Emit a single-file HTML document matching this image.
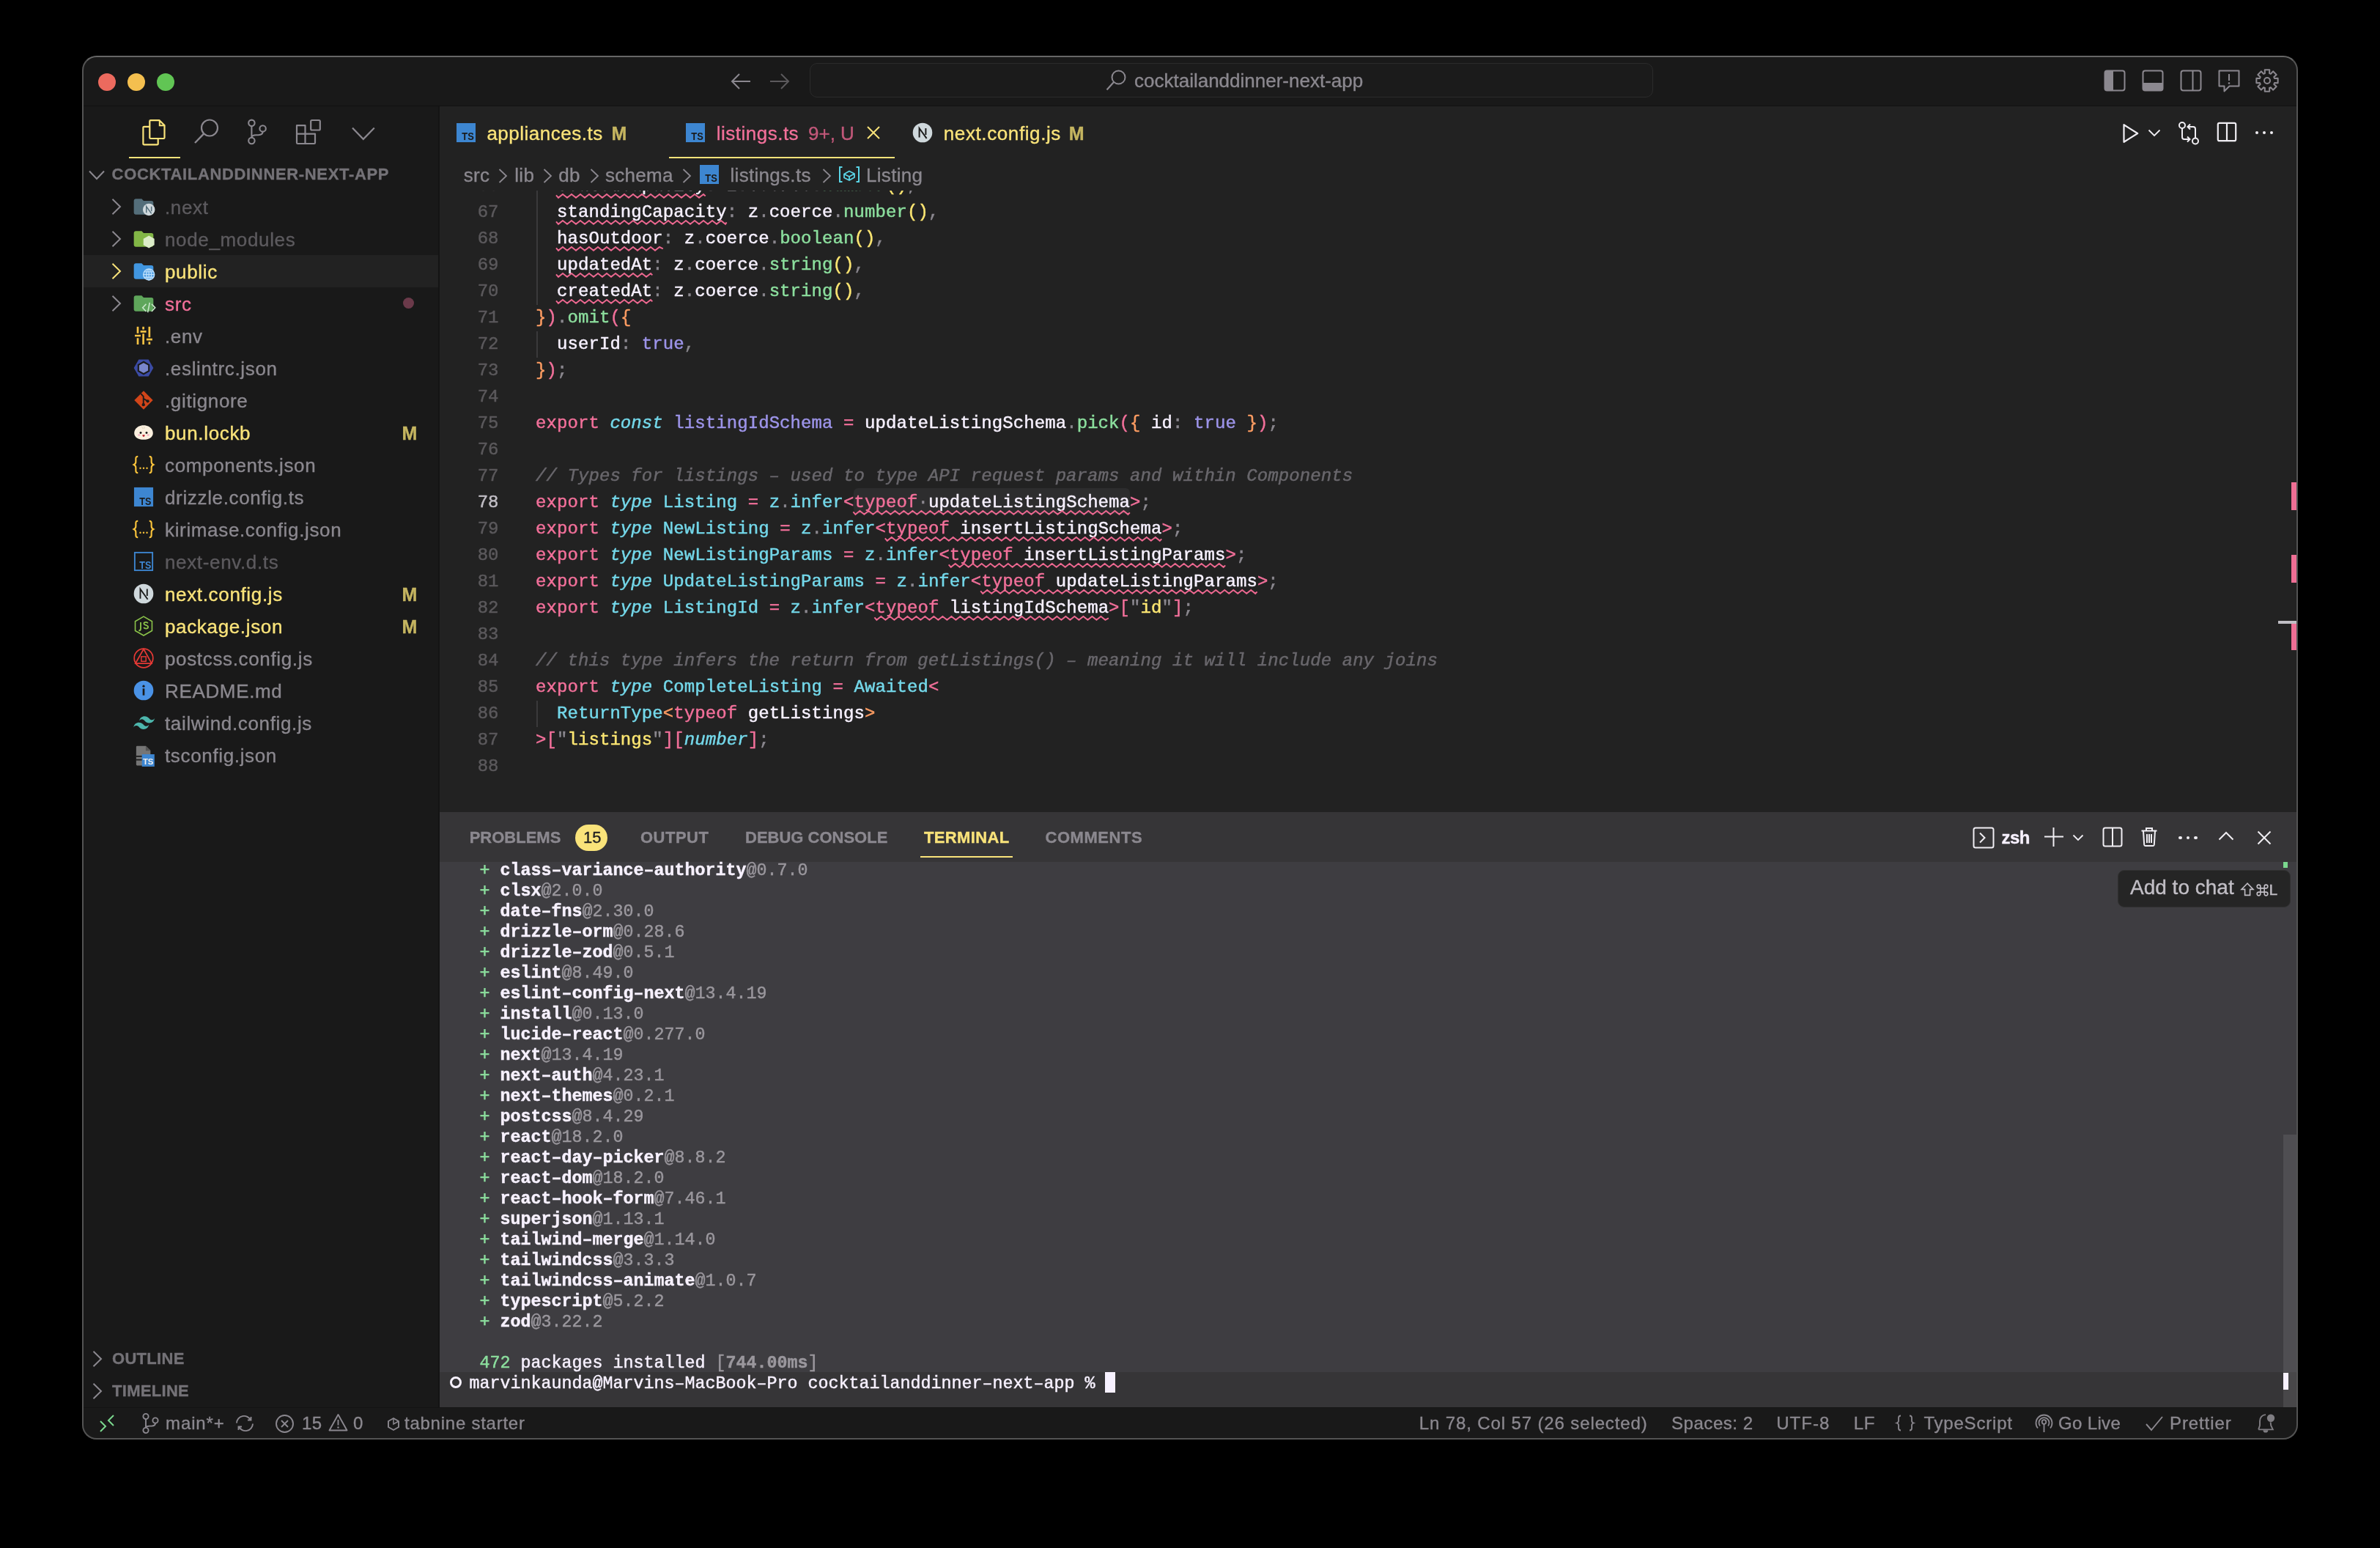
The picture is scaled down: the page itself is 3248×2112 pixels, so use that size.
<!DOCTYPE html><html><head><meta charset="utf-8"><style>
*{margin:0;padding:0;box-sizing:border-box}
html,body{width:3248px;height:2112px;background:#000;overflow:hidden}
body{position:relative;font-family:"Liberation Sans",sans-serif;color:#8b888f}
.a{position:absolute}
.t{position:absolute;white-space:pre;line-height:1;-webkit-text-stroke:0.35px currentColor}
.win{position:absolute;left:0;top:0;width:3248px;height:2112px;will-change:transform;clip-path:inset(76px 112px 148px 112px round 20px)}
.mono{font-family:"Liberation Mono",monospace;-webkit-text-stroke:0.45px currentColor}
svg{position:absolute;overflow:visible}
</style></head><body><div class="win"><div class="a" style="left:112px;top:76px;width:3024px;height:1888px;background:#191919;"></div><div class="a" style="left:112px;top:144px;width:3024px;height:1px;background:#111111;"></div><div class="a" style="left:598px;top:145px;width:2px;height:1775px;background:#141414;"></div><div class="a" style="left:600px;top:145px;width:2536px;height:963px;background:#222222;"></div><div class="a" style="left:600px;top:1108px;width:2536px;height:812px;background:#363537;"></div><div class="a" style="left:600px;top:1176px;width:2536px;height:696px;background:#3e3d41;"></div><div class="a" style="left:112px;top:1920px;width:3024px;height:44px;background:#191919;"></div><div class="a" style="left:134px;top:100px;width:24px;height:24px;border-radius:50%;background:#ec6a5e"></div><div class="a" style="left:174px;top:100px;width:24px;height:24px;border-radius:50%;background:#f4bf4f"></div><div class="a" style="left:214px;top:100px;width:24px;height:24px;border-radius:50%;background:#61c554"></div><div class="a" style="left:1105px;top:86px;width:1151px;height:47px;border-radius:10px;border:1.5px solid #2b2b2b;background:#1b1b1b"></div><div class="t" style="left:1548px;top:96.99px;font-size:26px;color:#8b888f;font-weight:normal;letter-spacing:0px;font-style:normal;">cocktailanddinner-next-app</div><div class="t" style="left:152.6px;top:227.38px;font-size:22px;color:#747277;font-weight:bold;letter-spacing:0.66px;font-style:normal;">COCKTAILANDDINNER-NEXT-APP</div><div class="a" style="left:114px;top:348px;width:484px;height:44px;background:#222222;"></div><div class="t" style="left:225px;top:269.79px;font-size:26px;color:#5c5a5e;font-weight:normal;letter-spacing:0.65px;font-style:normal;">.next</div><div class="t" style="left:225px;top:313.79px;font-size:26px;color:#5c5a5e;font-weight:normal;letter-spacing:0.65px;font-style:normal;">node_modules</div><div class="t" style="left:225px;top:357.79px;font-size:26px;color:#f9e37a;font-weight:normal;letter-spacing:0.65px;font-style:normal;">public</div><div class="t" style="left:225px;top:401.79px;font-size:26px;color:#f2709a;font-weight:normal;letter-spacing:0.65px;font-style:normal;">src</div><div class="t" style="left:225px;top:445.79px;font-size:26px;color:#8b888f;font-weight:normal;letter-spacing:0.65px;font-style:normal;">.env</div><div class="t" style="left:225px;top:489.79px;font-size:26px;color:#8b888f;font-weight:normal;letter-spacing:0.65px;font-style:normal;">.eslintrc.json</div><div class="t" style="left:225px;top:533.79px;font-size:26px;color:#8b888f;font-weight:normal;letter-spacing:0.65px;font-style:normal;">.gitignore</div><div class="t" style="left:225px;top:577.79px;font-size:26px;color:#f9e37a;font-weight:normal;letter-spacing:0.65px;font-style:normal;">bun.lockb</div><div class="t" style="left:225px;top:621.79px;font-size:26px;color:#8b888f;font-weight:normal;letter-spacing:0.65px;font-style:normal;">components.json</div><div class="t" style="left:225px;top:665.79px;font-size:26px;color:#8b888f;font-weight:normal;letter-spacing:0.65px;font-style:normal;">drizzle.config.ts</div><div class="t" style="left:225px;top:709.79px;font-size:26px;color:#8b888f;font-weight:normal;letter-spacing:0.65px;font-style:normal;">kirimase.config.json</div><div class="t" style="left:225px;top:753.79px;font-size:26px;color:#5c5a5e;font-weight:normal;letter-spacing:0.65px;font-style:normal;">next-env.d.ts</div><div class="t" style="left:225px;top:797.79px;font-size:26px;color:#f9e37a;font-weight:normal;letter-spacing:0.65px;font-style:normal;">next.config.js</div><div class="t" style="left:225px;top:841.79px;font-size:26px;color:#f9e37a;font-weight:normal;letter-spacing:0.65px;font-style:normal;">package.json</div><div class="t" style="left:225px;top:885.79px;font-size:26px;color:#8b888f;font-weight:normal;letter-spacing:0.65px;font-style:normal;">postcss.config.js</div><div class="t" style="left:225px;top:929.79px;font-size:26px;color:#8b888f;font-weight:normal;letter-spacing:0.65px;font-style:normal;">README.md</div><div class="t" style="left:225px;top:973.79px;font-size:26px;color:#8b888f;font-weight:normal;letter-spacing:0.65px;font-style:normal;">tailwind.config.js</div><div class="t" style="left:225px;top:1017.79px;font-size:26px;color:#8b888f;font-weight:normal;letter-spacing:0.65px;font-style:normal;">tsconfig.json</div><div class="t" style="left:548.4px;top:578.64px;font-size:25px;color:#c5b560;font-weight:bold;letter-spacing:0px;font-style:normal;">M</div><div class="t" style="left:548.4px;top:798.64px;font-size:25px;color:#c5b560;font-weight:bold;letter-spacing:0px;font-style:normal;">M</div><div class="t" style="left:548.4px;top:842.64px;font-size:25px;color:#c5b560;font-weight:bold;letter-spacing:0px;font-style:normal;">M</div><div class="a" style="left:550px;top:406px;width:15px;height:15px;border-radius:50%;background:#6b3a4a"></div><div class="t" style="left:153px;top:1843.38px;font-size:22px;color:#747277;font-weight:bold;letter-spacing:0.3px;font-style:normal;">OUTLINE</div><div class="t" style="left:153px;top:1887.38px;font-size:22px;color:#747277;font-weight:bold;letter-spacing:0.3px;font-style:normal;">TIMELINE</div><div class="t" style="left:664.4px;top:169.19px;font-size:26px;color:#f9e37a;font-weight:normal;letter-spacing:0.5px;font-style:normal;">appliances.ts</div><div class="t" style="left:834.6px;top:170.04px;font-size:25px;color:#c5b560;font-weight:bold;letter-spacing:0px;font-style:normal;">M</div><div class="t" style="left:977.7px;top:169.19px;font-size:26px;color:#f2709a;font-weight:normal;letter-spacing:0.5px;font-style:normal;">listings.ts</div><div class="t" style="left:1103px;top:169.19px;font-size:26px;color:#c2587a;font-weight:normal;letter-spacing:0px;font-style:normal;">9+, U</div><div class="t" style="left:1287.8px;top:169.19px;font-size:26px;color:#f9e37a;font-weight:normal;letter-spacing:0.6px;font-style:normal;">next.config.js</div><div class="t" style="left:1458.8px;top:170.04px;font-size:25px;color:#c5b560;font-weight:bold;letter-spacing:0px;font-style:normal;">M</div><div class="a" style="left:913px;top:214px;width:308px;height:2px;background:#f9e37a;"></div><div class="t" style="left:632.7px;top:225.99px;font-size:26px;color:#8b888f;font-weight:normal;letter-spacing:0.3px;font-style:normal;">src</div><div class="t" style="left:702.3px;top:225.99px;font-size:26px;color:#8b888f;font-weight:normal;letter-spacing:0.3px;font-style:normal;">lib</div><div class="t" style="left:762.3px;top:225.99px;font-size:26px;color:#8b888f;font-weight:normal;letter-spacing:0.3px;font-style:normal;">db</div><div class="t" style="left:826px;top:225.99px;font-size:26px;color:#8b888f;font-weight:normal;letter-spacing:0.3px;font-style:normal;">schema</div><div class="t" style="left:996.5px;top:225.99px;font-size:26px;color:#8b888f;font-weight:normal;letter-spacing:0.3px;font-style:normal;">listings.ts</div><div class="t" style="left:1182px;top:225.99px;font-size:26px;color:#8b888f;font-weight:normal;letter-spacing:0.3px;font-style:normal;">Listing</div><div class="a" style="left:600px;top:260px;width:2536px;height:848px;overflow:hidden"><div class="a" style="left:565.4px;top:406.4px;width:376.5px;height:35px;background:#2d2d2e;border-radius:6px"></div><div class="a" style="left:132px;top:-167.6px;width:2px;height:324px;background:#3a393b"></div><div class="a" style="left:132px;top:192.4px;width:2px;height:36px;background:#3a393b"></div><div class="a" style="left:132px;top:696.4px;width:2px;height:36px;background:#3a393b"></div><div class="t mono" style="left:-40px;top:-23.6px;width:120.5px;text-align:right;font-size:24px;line-height:36px;color:#5b595c">66</div><div class="t mono" style="left:131.0px;top:-23.6px;font-size:24px;letter-spacing:0.080px;line-height:36px"><span style="color:#f7f1ff">  </span><span style="color:#f7f1ff">seatedCapacity</span><span style="color:#8b888f">:</span><span style="color:#f7f1ff"> z</span><span style="color:#8b888f">.</span><span style="color:#f7f1ff">coerce</span><span style="color:#8b888f">.</span><span style="color:#8cdf9e">number</span><span style="color:#fce672">()</span><span style="color:#8b888f">,</span></div><div class="t mono" style="left:-40px;top:12.4px;width:120.5px;text-align:right;font-size:24px;line-height:36px;color:#5b595c">67</div><div class="t mono" style="left:131.0px;top:12.4px;font-size:24px;letter-spacing:0.080px;line-height:36px"><span style="color:#f7f1ff">  </span><span style="color:#f7f1ff">standingCapacity</span><span style="color:#8b888f">:</span><span style="color:#f7f1ff"> z</span><span style="color:#8b888f">.</span><span style="color:#f7f1ff">coerce</span><span style="color:#8b888f">.</span><span style="color:#8cdf9e">number</span><span style="color:#fce672">()</span><span style="color:#8b888f">,</span></div><div class="t mono" style="left:-40px;top:48.4px;width:120.5px;text-align:right;font-size:24px;line-height:36px;color:#5b595c">68</div><div class="t mono" style="left:131.0px;top:48.4px;font-size:24px;letter-spacing:0.080px;line-height:36px"><span style="color:#f7f1ff">  </span><span style="color:#f7f1ff">hasOutdoor</span><span style="color:#8b888f">:</span><span style="color:#f7f1ff"> z</span><span style="color:#8b888f">.</span><span style="color:#f7f1ff">coerce</span><span style="color:#8b888f">.</span><span style="color:#8cdf9e">boolean</span><span style="color:#fce672">()</span><span style="color:#8b888f">,</span></div><div class="t mono" style="left:-40px;top:84.4px;width:120.5px;text-align:right;font-size:24px;line-height:36px;color:#5b595c">69</div><div class="t mono" style="left:131.0px;top:84.4px;font-size:24px;letter-spacing:0.080px;line-height:36px"><span style="color:#f7f1ff">  </span><span style="color:#f7f1ff">updatedAt</span><span style="color:#8b888f">:</span><span style="color:#f7f1ff"> z</span><span style="color:#8b888f">.</span><span style="color:#f7f1ff">coerce</span><span style="color:#8b888f">.</span><span style="color:#8cdf9e">string</span><span style="color:#fce672">()</span><span style="color:#8b888f">,</span></div><div class="t mono" style="left:-40px;top:120.4px;width:120.5px;text-align:right;font-size:24px;line-height:36px;color:#5b595c">70</div><div class="t mono" style="left:131.0px;top:120.4px;font-size:24px;letter-spacing:0.080px;line-height:36px"><span style="color:#f7f1ff">  </span><span style="color:#f7f1ff">createdAt</span><span style="color:#8b888f">:</span><span style="color:#f7f1ff"> z</span><span style="color:#8b888f">.</span><span style="color:#f7f1ff">coerce</span><span style="color:#8b888f">.</span><span style="color:#8cdf9e">string</span><span style="color:#fce672">()</span><span style="color:#8b888f">,</span></div><div class="t mono" style="left:-40px;top:156.4px;width:120.5px;text-align:right;font-size:24px;line-height:36px;color:#5b595c">71</div><div class="t mono" style="left:131.0px;top:156.4px;font-size:24px;letter-spacing:0.080px;line-height:36px"><span style="color:#fc9c62">}</span><span style="color:#f2709a">)</span><span style="color:#8b888f">.</span><span style="color:#8cdf9e">omit</span><span style="color:#f2709a">(</span><span style="color:#fc9c62">{</span></div><div class="t mono" style="left:-40px;top:192.4px;width:120.5px;text-align:right;font-size:24px;line-height:36px;color:#5b595c">72</div><div class="t mono" style="left:131.0px;top:192.4px;font-size:24px;letter-spacing:0.080px;line-height:36px"><span style="color:#f7f1ff">  </span><span style="color:#f7f1ff">userId</span><span style="color:#8b888f">:</span><span style="color:#f7f1ff"> </span><span style="color:#9d94e9">true</span><span style="color:#8b888f">,</span></div><div class="t mono" style="left:-40px;top:228.4px;width:120.5px;text-align:right;font-size:24px;line-height:36px;color:#5b595c">73</div><div class="t mono" style="left:131.0px;top:228.4px;font-size:24px;letter-spacing:0.080px;line-height:36px"><span style="color:#fc9c62">}</span><span style="color:#f2709a">)</span><span style="color:#8b888f">;</span></div><div class="t mono" style="left:-40px;top:264.4px;width:120.5px;text-align:right;font-size:24px;line-height:36px;color:#5b595c">74</div><div class="t mono" style="left:-40px;top:300.4px;width:120.5px;text-align:right;font-size:24px;line-height:36px;color:#5b595c">75</div><div class="t mono" style="left:131.0px;top:300.4px;font-size:24px;letter-spacing:0.080px;line-height:36px"><span style="color:#f2709a">export</span><span style="color:#f7f1ff"> </span><span style="color:#74d8ea;font-style:italic">const</span><span style="color:#f7f1ff"> </span><span style="color:#9d94e9">listingIdSchema</span><span style="color:#f7f1ff"> </span><span style="color:#f2709a">=</span><span style="color:#f7f1ff"> updateListingSchema</span><span style="color:#8b888f">.</span><span style="color:#8cdf9e">pick</span><span style="color:#f2709a">(</span><span style="color:#fc9c62">{</span><span style="color:#f7f1ff"> id</span><span style="color:#8b888f">:</span><span style="color:#f7f1ff"> </span><span style="color:#9d94e9">true</span><span style="color:#f7f1ff"> </span><span style="color:#fc9c62">}</span><span style="color:#f2709a">)</span><span style="color:#8b888f">;</span></div><div class="t mono" style="left:-40px;top:336.4px;width:120.5px;text-align:right;font-size:24px;line-height:36px;color:#5b595c">76</div><div class="t mono" style="left:-40px;top:372.4px;width:120.5px;text-align:right;font-size:24px;line-height:36px;color:#5b595c">77</div><div class="t mono" style="left:131.0px;top:372.4px;font-size:24px;letter-spacing:0.080px;line-height:36px"><span style="color:#69676c;font-style:italic">// Types for listings – used to type API request params and within Components</span></div><div class="t mono" style="left:-40px;top:408.4px;width:120.5px;text-align:right;font-size:24px;line-height:36px;color:#c1bec5">78</div><div class="t mono" style="left:131.0px;top:408.4px;font-size:24px;letter-spacing:0.080px;line-height:36px"><span style="color:#f2709a">export</span><span style="color:#f7f1ff"> </span><span style="color:#74d8ea;font-style:italic">type</span><span style="color:#74d8ea"> Listing </span><span style="color:#f2709a">=</span><span style="color:#74d8ea"> z</span><span style="color:#8b888f">.</span><span style="color:#74d8ea">infer</span><span style="color:#f2709a">&lt;</span><span style="color:#f2709a">typeof</span><span style="color:#8b888f">·</span><span style="color:#f7f1ff">updateListingSchema</span><span style="color:#f2709a">&gt;</span><span style="color:#8b888f">;</span></div><div class="t mono" style="left:-40px;top:444.4px;width:120.5px;text-align:right;font-size:24px;line-height:36px;color:#5b595c">79</div><div class="t mono" style="left:131.0px;top:444.4px;font-size:24px;letter-spacing:0.080px;line-height:36px"><span style="color:#f2709a">export</span><span style="color:#f7f1ff"> </span><span style="color:#74d8ea;font-style:italic">type</span><span style="color:#74d8ea"> NewListing </span><span style="color:#f2709a">=</span><span style="color:#74d8ea"> z</span><span style="color:#8b888f">.</span><span style="color:#74d8ea">infer</span><span style="color:#f2709a">&lt;</span><span style="color:#f2709a">typeof</span><span style="color:#f7f1ff"> insertListingSchema</span><span style="color:#f2709a">&gt;</span><span style="color:#8b888f">;</span></div><div class="t mono" style="left:-40px;top:480.4px;width:120.5px;text-align:right;font-size:24px;line-height:36px;color:#5b595c">80</div><div class="t mono" style="left:131.0px;top:480.4px;font-size:24px;letter-spacing:0.080px;line-height:36px"><span style="color:#f2709a">export</span><span style="color:#f7f1ff"> </span><span style="color:#74d8ea;font-style:italic">type</span><span style="color:#74d8ea"> NewListingParams </span><span style="color:#f2709a">=</span><span style="color:#74d8ea"> z</span><span style="color:#8b888f">.</span><span style="color:#74d8ea">infer</span><span style="color:#f2709a">&lt;</span><span style="color:#f2709a">typeof</span><span style="color:#f7f1ff"> insertListingParams</span><span style="color:#f2709a">&gt;</span><span style="color:#8b888f">;</span></div><div class="t mono" style="left:-40px;top:516.4px;width:120.5px;text-align:right;font-size:24px;line-height:36px;color:#5b595c">81</div><div class="t mono" style="left:131.0px;top:516.4px;font-size:24px;letter-spacing:0.080px;line-height:36px"><span style="color:#f2709a">export</span><span style="color:#f7f1ff"> </span><span style="color:#74d8ea;font-style:italic">type</span><span style="color:#74d8ea"> UpdateListingParams </span><span style="color:#f2709a">=</span><span style="color:#74d8ea"> z</span><span style="color:#8b888f">.</span><span style="color:#74d8ea">infer</span><span style="color:#f2709a">&lt;</span><span style="color:#f2709a">typeof</span><span style="color:#f7f1ff"> updateListingParams</span><span style="color:#f2709a">&gt;</span><span style="color:#8b888f">;</span></div><div class="t mono" style="left:-40px;top:552.4px;width:120.5px;text-align:right;font-size:24px;line-height:36px;color:#5b595c">82</div><div class="t mono" style="left:131.0px;top:552.4px;font-size:24px;letter-spacing:0.080px;line-height:36px"><span style="color:#f2709a">export</span><span style="color:#f7f1ff"> </span><span style="color:#74d8ea;font-style:italic">type</span><span style="color:#74d8ea"> ListingId </span><span style="color:#f2709a">=</span><span style="color:#74d8ea"> z</span><span style="color:#8b888f">.</span><span style="color:#74d8ea">infer</span><span style="color:#f2709a">&lt;</span><span style="color:#f2709a">typeof</span><span style="color:#f7f1ff"> listingIdSchema</span><span style="color:#f2709a">&gt;</span><span style="color:#f2709a">[</span><span style="color:#8b888f">&quot;</span><span style="color:#fce672">id</span><span style="color:#8b888f">&quot;</span><span style="color:#f2709a">]</span><span style="color:#8b888f">;</span></div><div class="t mono" style="left:-40px;top:588.4px;width:120.5px;text-align:right;font-size:24px;line-height:36px;color:#5b595c">83</div><div class="t mono" style="left:-40px;top:624.4px;width:120.5px;text-align:right;font-size:24px;line-height:36px;color:#5b595c">84</div><div class="t mono" style="left:131.0px;top:624.4px;font-size:24px;letter-spacing:0.080px;line-height:36px"><span style="color:#69676c;font-style:italic">// this type infers the return from getListings() – meaning it will include any joins</span></div><div class="t mono" style="left:-40px;top:660.4px;width:120.5px;text-align:right;font-size:24px;line-height:36px;color:#5b595c">85</div><div class="t mono" style="left:131.0px;top:660.4px;font-size:24px;letter-spacing:0.080px;line-height:36px"><span style="color:#f2709a">export</span><span style="color:#f7f1ff"> </span><span style="color:#74d8ea;font-style:italic">type</span><span style="color:#74d8ea"> CompleteListing </span><span style="color:#f2709a">=</span><span style="color:#74d8ea"> Awaited</span><span style="color:#f2709a">&lt;</span></div><div class="t mono" style="left:-40px;top:696.4px;width:120.5px;text-align:right;font-size:24px;line-height:36px;color:#5b595c">86</div><div class="t mono" style="left:131.0px;top:696.4px;font-size:24px;letter-spacing:0.080px;line-height:36px"><span style="color:#74d8ea">  ReturnType</span><span style="color:#fc9c62">&lt;</span><span style="color:#f2709a">typeof</span><span style="color:#f7f1ff"> getListings</span><span style="color:#fc9c62">&gt;</span></div><div class="t mono" style="left:-40px;top:732.4px;width:120.5px;text-align:right;font-size:24px;line-height:36px;color:#5b595c">87</div><div class="t mono" style="left:131.0px;top:732.4px;font-size:24px;letter-spacing:0.080px;line-height:36px"><span style="color:#f2709a">&gt;</span><span style="color:#f2709a">[</span><span style="color:#8b888f">&quot;</span><span style="color:#fce672">listings</span><span style="color:#8b888f">&quot;</span><span style="color:#f2709a">]</span><span style="color:#f2709a">[</span><span style="color:#74d8ea;font-style:italic">number</span><span style="color:#f2709a">]</span><span style="color:#8b888f">;</span></div><div class="t mono" style="left:-40px;top:768.4px;width:120.5px;text-align:right;font-size:24px;line-height:36px;color:#5b595c">88</div><svg class="a" style="left:0;top:0" width="2536" height="847"><polyline points="159.0,6.4 162.0,9.8 168.0,5.0 174.0,9.8 180.0,5.0 186.0,9.8 192.0,5.0 198.0,9.8 204.0,5.0 210.0,9.8 216.0,5.0 222.0,9.8 228.0,5.0 234.0,9.8 240.0,5.0 246.0,9.8 252.0,5.0 258.0,9.8 264.0,5.0 270.0,9.8 276.0,5.0 282.0,9.8 288.0,5.0 294.0,9.8 300.0,5.0 306.0,9.8 312.0,5.0 318.0,9.8 324.0,5.0 330.0,9.8 336.0,5.0 342.0,9.8 348.0,5.0 354.0,9.8 360.0,5.0 362.7,7.4" fill="none" stroke="#ec6890" stroke-width="2"/><polyline points="159.0,42.4 162.0,45.8 168.0,41.0 174.0,45.8 180.0,41.0 186.0,45.8 192.0,41.0 198.0,45.8 204.0,41.0 210.0,45.8 216.0,41.0 222.0,45.8 228.0,41.0 234.0,45.8 240.0,41.0 246.0,45.8 252.0,41.0 258.0,45.8 264.0,41.0 270.0,45.8 276.0,41.0 282.0,45.8 288.0,41.0 294.0,45.8 300.0,41.0 306.0,45.8 312.0,41.0 318.0,45.8 324.0,41.0 330.0,45.8 336.0,41.0 342.0,45.8 348.0,41.0 354.0,45.8 360.0,41.0 366.0,45.8 372.0,41.0 378.0,45.8 384.0,41.0 390.0,45.8 391.6,43.4" fill="none" stroke="#ec6890" stroke-width="2"/><polyline points="159.0,78.4 162.0,81.8 168.0,77.0 174.0,81.8 180.0,77.0 186.0,81.8 192.0,77.0 198.0,81.8 204.0,77.0 210.0,81.8 216.0,77.0 222.0,81.8 228.0,77.0 234.0,81.8 240.0,77.0 246.0,81.8 252.0,77.0 258.0,81.8 264.0,77.0 270.0,81.8 276.0,77.0 282.0,81.8 288.0,77.0 294.0,81.8 300.0,77.0 304.8,79.4" fill="none" stroke="#ec6890" stroke-width="2"/><polyline points="159.0,114.4 162.0,117.8 168.0,113.0 174.0,117.8 180.0,113.0 186.0,117.8 192.0,113.0 198.0,117.8 204.0,113.0 210.0,117.8 216.0,113.0 222.0,117.8 228.0,113.0 234.0,117.8 240.0,113.0 246.0,117.8 252.0,113.0 258.0,117.8 264.0,113.0 270.0,117.8 276.0,113.0 282.0,117.8 288.0,113.0 290.3,115.4" fill="none" stroke="#ec6890" stroke-width="2"/><polyline points="159.0,150.4 162.0,153.8 168.0,149.0 174.0,153.8 180.0,149.0 186.0,153.8 192.0,149.0 198.0,153.8 204.0,149.0 210.0,153.8 216.0,149.0 222.0,153.8 228.0,149.0 234.0,153.8 240.0,149.0 246.0,153.8 252.0,149.0 258.0,153.8 264.0,149.0 270.0,153.8 276.0,149.0 282.0,153.8 288.0,149.0 290.3,151.4" fill="none" stroke="#ec6890" stroke-width="2"/><polyline points="564.4,438.4 567.4,441.8 573.4,437.0 579.4,441.8 585.4,437.0 591.4,441.8 597.4,437.0 603.4,441.8 609.4,437.0 615.4,441.8 621.4,437.0 627.4,441.8 633.4,437.0 639.4,441.8 645.4,437.0 651.4,441.8 657.4,437.0 663.4,441.8 669.4,437.0 675.4,441.8 681.4,437.0 687.4,441.8 693.4,437.0 699.4,441.8 705.4,437.0 711.4,441.8 717.4,437.0 723.4,441.8 729.4,437.0 735.4,441.8 741.4,437.0 747.4,441.8 753.4,437.0 759.4,441.8 765.4,437.0 771.4,441.8 777.4,437.0 783.4,441.8 789.4,437.0 795.4,441.8 801.4,437.0 807.4,441.8 813.4,437.0 819.4,441.8 825.4,437.0 831.4,441.8 837.4,437.0 843.4,441.8 849.4,437.0 855.4,441.8 861.4,437.0 867.4,441.8 873.4,437.0 879.4,441.8 885.4,437.0 891.4,441.8 897.4,437.0 903.4,441.8 909.4,437.0 915.4,441.8 921.4,437.0 927.4,441.8 933.4,437.0 939.4,441.8 941.9,439.4" fill="none" stroke="#ec6890" stroke-width="2"/><polyline points="607.8,474.4 610.8,477.8 616.8,473.0 622.8,477.8 628.8,473.0 634.8,477.8 640.8,473.0 646.8,477.8 652.8,473.0 658.8,477.8 664.8,473.0 670.8,477.8 676.8,473.0 682.8,477.8 688.8,473.0 694.8,477.8 700.8,473.0 706.8,477.8 712.8,473.0 718.8,477.8 724.8,473.0 730.8,477.8 736.8,473.0 742.8,477.8 748.8,473.0 754.8,477.8 760.8,473.0 766.8,477.8 772.8,473.0 778.8,477.8 784.8,473.0 790.8,477.8 796.8,473.0 802.8,477.8 808.8,473.0 814.8,477.8 820.8,473.0 826.8,477.8 832.8,473.0 838.8,477.8 844.8,473.0 850.8,477.8 856.8,473.0 862.8,477.8 868.8,473.0 874.8,477.8 880.8,473.0 886.8,477.8 892.8,473.0 898.8,477.8 904.8,473.0 910.8,477.8 916.8,473.0 922.8,477.8 928.8,473.0 934.8,477.8 940.8,473.0 946.8,477.8 952.8,473.0 958.8,477.8 964.8,473.0 970.8,477.8 976.8,473.0 982.8,477.8 985.3,475.4" fill="none" stroke="#ec6890" stroke-width="2"/><polyline points="694.7,510.4 697.7,513.8 703.7,509.0 709.7,513.8 715.7,509.0 721.7,513.8 727.7,509.0 733.7,513.8 739.7,509.0 745.7,513.8 751.7,509.0 757.7,513.8 763.7,509.0 769.7,513.8 775.7,509.0 781.7,513.8 787.7,509.0 793.7,513.8 799.7,509.0 805.7,513.8 811.7,509.0 817.7,513.8 823.7,509.0 829.7,513.8 835.7,509.0 841.7,513.8 847.7,509.0 853.7,513.8 859.7,509.0 865.7,513.8 871.7,509.0 877.7,513.8 883.7,509.0 889.7,513.8 895.7,509.0 901.7,513.8 907.7,509.0 913.7,513.8 919.7,509.0 925.7,513.8 931.7,509.0 937.7,513.8 943.7,509.0 949.7,513.8 955.7,509.0 961.7,513.8 967.7,509.0 973.7,513.8 979.7,509.0 985.7,513.8 991.7,509.0 997.7,513.8 1003.7,509.0 1009.7,513.8 1015.7,509.0 1021.7,513.8 1027.7,509.0 1033.7,513.8 1039.7,509.0 1045.7,513.8 1051.7,509.0 1057.7,513.8 1063.7,509.0 1069.7,513.8 1072.2,511.4" fill="none" stroke="#ec6890" stroke-width="2"/><polyline points="738.2,546.4 741.2,549.8 747.2,545.0 753.2,549.8 759.2,545.0 765.2,549.8 771.2,545.0 777.2,549.8 783.2,545.0 789.2,549.8 795.2,545.0 801.2,549.8 807.2,545.0 813.2,549.8 819.2,545.0 825.2,549.8 831.2,545.0 837.2,549.8 843.2,545.0 849.2,549.8 855.2,545.0 861.2,549.8 867.2,545.0 873.2,549.8 879.2,545.0 885.2,549.8 891.2,545.0 897.2,549.8 903.2,545.0 909.2,549.8 915.2,545.0 921.2,549.8 927.2,545.0 933.2,549.8 939.2,545.0 945.2,549.8 951.2,545.0 957.2,549.8 963.2,545.0 969.2,549.8 975.2,545.0 981.2,549.8 987.2,545.0 993.2,549.8 999.2,545.0 1005.2,549.8 1011.2,545.0 1017.2,549.8 1023.2,545.0 1029.2,549.8 1035.2,545.0 1041.2,549.8 1047.2,545.0 1053.2,549.8 1059.2,545.0 1065.2,549.8 1071.2,545.0 1077.2,549.8 1083.2,545.0 1089.2,549.8 1095.2,545.0 1101.2,549.8 1107.2,545.0 1113.2,549.8 1115.6,547.4" fill="none" stroke="#ec6890" stroke-width="2"/><polyline points="593.4,582.4 596.4,585.8 602.4,581.0 608.4,585.8 614.4,581.0 620.4,585.8 626.4,581.0 632.4,585.8 638.4,581.0 644.4,585.8 650.4,581.0 656.4,585.8 662.4,581.0 668.4,585.8 674.4,581.0 680.4,585.8 686.4,581.0 692.4,585.8 698.4,581.0 704.4,585.8 710.4,581.0 716.4,585.8 722.4,581.0 728.4,585.8 734.4,581.0 740.4,585.8 746.4,581.0 752.4,585.8 758.4,581.0 764.4,585.8 770.4,581.0 776.4,585.8 782.4,581.0 788.4,585.8 794.4,581.0 800.4,585.8 806.4,581.0 812.4,585.8 818.4,581.0 824.4,585.8 830.4,581.0 836.4,585.8 842.4,581.0 848.4,585.8 854.4,581.0 860.4,585.8 866.4,581.0 872.4,585.8 878.4,581.0 884.4,585.8 890.4,581.0 896.4,585.8 902.4,581.0 908.4,585.8 912.9,583.4" fill="none" stroke="#ec6890" stroke-width="2"/></svg></div><div class="a" style="left:3127px;top:658px;width:9px;height:38px;background:#ee6f95;"></div><div class="a" style="left:3127px;top:756.5px;width:9px;height:38.5px;background:#ee6f95;"></div><div class="a" style="left:3127px;top:848.5px;width:9px;height:38.5px;background:#ee6f95;"></div><div class="a" style="left:3109px;top:847px;width:27px;height:4px;background:#c0bec4;"></div><div class="t" style="left:640.7px;top:1132.38px;font-size:22px;color:#8b888f;font-weight:bold;letter-spacing:0px;font-style:normal;">PROBLEMS</div><div class="a" style="left:785px;top:1125px;width:44px;height:36px;border-radius:18px;background:#f9e37a"></div><div class="t" style="left:796px;top:1132.38px;font-size:22px;color:#222222;font-weight:normal;letter-spacing:0px;font-style:normal;">15</div><div class="t" style="left:874px;top:1132.38px;font-size:22px;color:#8b888f;font-weight:bold;letter-spacing:0.5px;font-style:normal;">OUTPUT</div><div class="t" style="left:1017px;top:1132.38px;font-size:22px;color:#8b888f;font-weight:bold;letter-spacing:0px;font-style:normal;">DEBUG CONSOLE</div><div class="t" style="left:1261px;top:1132.38px;font-size:22px;color:#f9e37a;font-weight:bold;letter-spacing:0.35px;font-style:normal;">TERMINAL</div><div class="t" style="left:1426.5px;top:1132.38px;font-size:22px;color:#8b888f;font-weight:bold;letter-spacing:0.55px;font-style:normal;">COMMENTS</div><div class="a" style="left:1256px;top:1168px;width:126px;height:2px;background:#f9e37a;"></div><div class="t" style="left:2731.6px;top:1130.68px;font-size:24px;color:#f7f1ff;font-weight:bold;letter-spacing:-0.6px;font-style:normal;">zsh</div><div class="t mono" style="left:640.5px;top:1173.5px;font-size:23.33px;line-height:28px;color:#f7f1ff"> <span style="color:#8cdf9e">+</span> <b>class–variance–authority</b><span style="color:#9a979d">@0.7.0</span></div><div class="t mono" style="left:640.5px;top:1201.5px;font-size:23.33px;line-height:28px;color:#f7f1ff"> <span style="color:#8cdf9e">+</span> <b>clsx</b><span style="color:#9a979d">@2.0.0</span></div><div class="t mono" style="left:640.5px;top:1229.5px;font-size:23.33px;line-height:28px;color:#f7f1ff"> <span style="color:#8cdf9e">+</span> <b>date–fns</b><span style="color:#9a979d">@2.30.0</span></div><div class="t mono" style="left:640.5px;top:1257.5px;font-size:23.33px;line-height:28px;color:#f7f1ff"> <span style="color:#8cdf9e">+</span> <b>drizzle–orm</b><span style="color:#9a979d">@0.28.6</span></div><div class="t mono" style="left:640.5px;top:1285.5px;font-size:23.33px;line-height:28px;color:#f7f1ff"> <span style="color:#8cdf9e">+</span> <b>drizzle–zod</b><span style="color:#9a979d">@0.5.1</span></div><div class="t mono" style="left:640.5px;top:1313.5px;font-size:23.33px;line-height:28px;color:#f7f1ff"> <span style="color:#8cdf9e">+</span> <b>eslint</b><span style="color:#9a979d">@8.49.0</span></div><div class="t mono" style="left:640.5px;top:1341.5px;font-size:23.33px;line-height:28px;color:#f7f1ff"> <span style="color:#8cdf9e">+</span> <b>eslint–config–next</b><span style="color:#9a979d">@13.4.19</span></div><div class="t mono" style="left:640.5px;top:1369.5px;font-size:23.33px;line-height:28px;color:#f7f1ff"> <span style="color:#8cdf9e">+</span> <b>install</b><span style="color:#9a979d">@0.13.0</span></div><div class="t mono" style="left:640.5px;top:1397.5px;font-size:23.33px;line-height:28px;color:#f7f1ff"> <span style="color:#8cdf9e">+</span> <b>lucide–react</b><span style="color:#9a979d">@0.277.0</span></div><div class="t mono" style="left:640.5px;top:1425.5px;font-size:23.33px;line-height:28px;color:#f7f1ff"> <span style="color:#8cdf9e">+</span> <b>next</b><span style="color:#9a979d">@13.4.19</span></div><div class="t mono" style="left:640.5px;top:1453.5px;font-size:23.33px;line-height:28px;color:#f7f1ff"> <span style="color:#8cdf9e">+</span> <b>next–auth</b><span style="color:#9a979d">@4.23.1</span></div><div class="t mono" style="left:640.5px;top:1481.5px;font-size:23.33px;line-height:28px;color:#f7f1ff"> <span style="color:#8cdf9e">+</span> <b>next–themes</b><span style="color:#9a979d">@0.2.1</span></div><div class="t mono" style="left:640.5px;top:1509.5px;font-size:23.33px;line-height:28px;color:#f7f1ff"> <span style="color:#8cdf9e">+</span> <b>postcss</b><span style="color:#9a979d">@8.4.29</span></div><div class="t mono" style="left:640.5px;top:1537.5px;font-size:23.33px;line-height:28px;color:#f7f1ff"> <span style="color:#8cdf9e">+</span> <b>react</b><span style="color:#9a979d">@18.2.0</span></div><div class="t mono" style="left:640.5px;top:1565.5px;font-size:23.33px;line-height:28px;color:#f7f1ff"> <span style="color:#8cdf9e">+</span> <b>react–day–picker</b><span style="color:#9a979d">@8.8.2</span></div><div class="t mono" style="left:640.5px;top:1593.5px;font-size:23.33px;line-height:28px;color:#f7f1ff"> <span style="color:#8cdf9e">+</span> <b>react–dom</b><span style="color:#9a979d">@18.2.0</span></div><div class="t mono" style="left:640.5px;top:1621.5px;font-size:23.33px;line-height:28px;color:#f7f1ff"> <span style="color:#8cdf9e">+</span> <b>react–hook–form</b><span style="color:#9a979d">@7.46.1</span></div><div class="t mono" style="left:640.5px;top:1649.5px;font-size:23.33px;line-height:28px;color:#f7f1ff"> <span style="color:#8cdf9e">+</span> <b>superjson</b><span style="color:#9a979d">@1.13.1</span></div><div class="t mono" style="left:640.5px;top:1677.5px;font-size:23.33px;line-height:28px;color:#f7f1ff"> <span style="color:#8cdf9e">+</span> <b>tailwind–merge</b><span style="color:#9a979d">@1.14.0</span></div><div class="t mono" style="left:640.5px;top:1705.5px;font-size:23.33px;line-height:28px;color:#f7f1ff"> <span style="color:#8cdf9e">+</span> <b>tailwindcss</b><span style="color:#9a979d">@3.3.3</span></div><div class="t mono" style="left:640.5px;top:1733.5px;font-size:23.33px;line-height:28px;color:#f7f1ff"> <span style="color:#8cdf9e">+</span> <b>tailwindcss–animate</b><span style="color:#9a979d">@1.0.7</span></div><div class="t mono" style="left:640.5px;top:1761.5px;font-size:23.33px;line-height:28px;color:#f7f1ff"> <span style="color:#8cdf9e">+</span> <b>typescript</b><span style="color:#9a979d">@5.2.2</span></div><div class="t mono" style="left:640.5px;top:1789.5px;font-size:23.33px;line-height:28px;color:#f7f1ff"> <span style="color:#8cdf9e">+</span> <b>zod</b><span style="color:#9a979d">@3.22.2</span></div><div class="t mono" style="left:640.5px;top:1845.5px;font-size:23.33px;line-height:28px;color:#f7f1ff"> <span style="color:#8cdf9e">472</span> packages installed <span style="color:#9a979d">[<b>744.00ms</b>]</span></div><div class="t mono" style="left:640.5px;top:1873.5px;font-size:23.33px;line-height:28px;color:#f7f1ff">marvinkaunda@Marvins–MacBook–Pro cocktailanddinner–next–app % </div><div class="a" style="left:1508px;top:1872px;width:14px;height:28px;background:#f7f1ff;"></div><div class="a" style="left:614px;top:1878px;width:16px;height:16px;border-radius:50%;border:3px solid #f7f1ff"></div><div class="a" style="left:2889.5px;top:1186.7px;width:236px;height:51px;border-radius:9px;background:#252525;border:1px solid #303030"></div><div class="t" style="left:2907px;top:1197.30px;font-size:28px;color:#c1bec5;font-weight:normal;letter-spacing:0px;font-style:normal;">Add to chat</div><div class="t" style="left:3096.5px;top:1203.22px;font-size:21px;color:#c1bec5;font-weight:normal;letter-spacing:0px;font-style:normal;">L</div><svg style="left:3078.5px;top:1205.5px" width="17" height="17" viewBox="0 0 16 16"><path d="M5.5 5.5H10.5V10.5H5.5ZM5.5 5.5V3.3A2.2 2.2 0 1 0 3.3 5.5H5.5M10.5 5.5V3.3A2.2 2.2 0 1 1 12.7 5.5H10.5M10.5 10.5V12.7A2.2 2.2 0 1 0 12.7 10.5H10.5M5.5 10.5V12.7A2.2 2.2 0 1 1 3.3 10.5H5.5" fill="none" stroke="#c1bec5" stroke-width="1.5"/></svg><svg style="left:3056px;top:1202.8px" width="22" height="20"><path d="M11 2.2L3 10.4h4.6v8h7v-8H19z" fill="none" stroke="#c1bec5" stroke-width="1.6" stroke-linejoin="miter"/></svg><div class="a" style="left:3116px;top:1176px;width:6px;height:8px;background:#7bd88f;"></div><div class="a" style="left:3116px;top:1548px;width:19px;height:372px;background:rgba(255,255,255,0.09);"></div><div class="a" style="left:3116px;top:1873px;width:7px;height:23px;background:#f7f1ff;"></div><div class="t" style="left:226px;top:1930.38px;font-size:24px;color:#8b888f;font-weight:normal;letter-spacing:0.9px;font-style:normal;">main*+</div><div class="t" style="left:412px;top:1930.38px;font-size:24px;color:#8b888f;font-weight:normal;letter-spacing:0.5px;font-style:normal;">15</div><div class="t" style="left:482px;top:1930.38px;font-size:24px;color:#8b888f;font-weight:normal;letter-spacing:0px;font-style:normal;">0</div><div class="t" style="left:552px;top:1930.38px;font-size:24px;color:#8b888f;font-weight:normal;letter-spacing:0.75px;font-style:normal;">tabnine starter</div><div class="t" style="left:1936.7px;top:1930.38px;font-size:24px;color:#8b888f;font-weight:normal;letter-spacing:0.88px;font-style:normal;">Ln 78, Col 57 (26 selected)</div><div class="t" style="left:2281px;top:1930.38px;font-size:24px;color:#8b888f;font-weight:normal;letter-spacing:0.55px;font-style:normal;">Spaces: 2</div><div class="t" style="left:2424.2px;top:1930.38px;font-size:24px;color:#8b888f;font-weight:normal;letter-spacing:1.05px;font-style:normal;">UTF-8</div><div class="t" style="left:2529.8px;top:1930.38px;font-size:24px;color:#8b888f;font-weight:normal;letter-spacing:0.5px;font-style:normal;">LF</div><div class="t" style="left:2625.4px;top:1930.38px;font-size:24px;color:#8b888f;font-weight:normal;letter-spacing:0.8px;font-style:normal;">TypeScript</div><div class="t" style="left:2809px;top:1930.38px;font-size:24px;color:#8b888f;font-weight:normal;letter-spacing:0.35px;font-style:normal;">Go Live</div><div class="t" style="left:2961px;top:1930.38px;font-size:24px;color:#8b888f;font-weight:normal;letter-spacing:0.9px;font-style:normal;">Prettier</div><div class="a" style="left:112px;top:1920px;width:3024px;height:1px;background:#141414;"></div><svg style="left:998px;top:100px;" width="28" height="22" viewBox="0 0 28 22"><path d="M1 11H26M11 1L1 11L11 21" fill="none" stroke="#8b888f" stroke-width="2"/></svg><svg style="left:1051px;top:100px;" width="26" height="22" viewBox="0 0 26 22"><path d="M0 11H25M15 1L25 11L15 21" fill="none" stroke="#5b595c" stroke-width="2"/></svg><svg style="left:1508px;top:94px;" width="32" height="32" viewBox="0 0 32 32"><circle cx="18.5" cy="11.5" r="9" fill="none" stroke="#8b888f" stroke-width="2"/><path d="M12 18L2.5 28.5" stroke="#8b888f" stroke-width="2.2"/></svg><svg style="left:2871px;top:95px;" width="30" height="30" viewBox="0 0 30 30"><rect x="1.5" y="1.5" width="27" height="27" rx="3" fill="none" stroke="#8b888f" stroke-width="2"/><path d="M2 4a2 2 0 0 1 2-2h9v26H4a2 2 0 0 1-2-2z" fill="#8b888f"/></svg><svg style="left:2923px;top:95px;" width="30" height="30" viewBox="0 0 30 30"><rect x="1.5" y="1.5" width="27" height="27" rx="3" fill="none" stroke="#8b888f" stroke-width="2"/><path d="M2 18h26v8a2 2 0 0 1-2 2H4a2 2 0 0 1-2-2z" fill="#8b888f"/></svg><svg style="left:2975px;top:95px;" width="30" height="30" viewBox="0 0 30 30"><rect x="1.5" y="1.5" width="27" height="27" rx="3" fill="none" stroke="#8b888f" stroke-width="2"/><path d="M17.5 2v26" stroke="#8b888f" stroke-width="2"/></svg><svg style="left:3027px;top:95px;" width="30" height="32" viewBox="0 0 30 32"><path d="M1.5 1.5h27v21h-13l-7 7v-7h-7z" fill="none" stroke="#8b888f" stroke-width="2" stroke-linejoin="round"/><path d="M15 6v9" stroke="#8b888f" stroke-width="2"/><circle cx="15" cy="18.5" r="1.3" fill="#8b888f"/></svg><svg style="left:3078px;top:94px;" width="32" height="32" viewBox="0 0 32 32"><polygon points="30.64,12.73 30.64,19.27 26.03,19.10 25.29,20.90 28.67,24.04 24.04,28.67 20.90,25.29 19.10,26.03 19.27,30.64 12.73,30.64 12.90,26.03 11.10,25.29 7.96,28.67 3.33,24.04 6.71,20.90 5.97,19.10 1.36,19.27 1.36,12.73 5.97,12.90 6.71,11.10 3.33,7.96 7.96,3.33 11.10,6.71 12.90,5.97 12.73,1.36 19.27,1.36 19.10,5.97 20.90,6.71 24.04,3.33 28.67,7.96 25.29,11.10 26.03,12.90" fill="none" stroke="#8b888f" stroke-width="2" stroke-linejoin="round"/><circle cx="16" cy="16" r="4" fill="none" stroke="#8b888f" stroke-width="2"/></svg><svg style="left:194px;top:163px;" width="34" height="38" viewBox="0 0 34 38"><path d="M11.5 1.2H23.6L30.5 8V24.8a1.2 1.2 0 0 1-1.2 1.2H11.5a1.2 1.2 0 0 1-1.2-1.2V2.4a1.2 1.2 0 0 1 1.2-1.2z" fill="none" stroke="#f9e37a" stroke-width="2.2" stroke-linejoin="round"/><path d="M23.8 1.5V8.2H30.3" fill="none" stroke="#f9e37a" stroke-width="2"/><path d="M10.3 9.8H2.6a1.2 1.2 0 0 0-1.2 1.2V33.2a1.2 1.2 0 0 0 1.2 1.2H20.5a1.2 1.2 0 0 0 1.2-1.2V26" fill="none" stroke="#f9e37a" stroke-width="2.2" stroke-linejoin="round"/></svg><div class="a" style="left:176px;top:213.5px;width:70px;height:2.5px;background:#f9e37a;"></div><svg style="left:262px;top:161px;" width="40" height="40" viewBox="0 0 40 40"><circle cx="24" cy="13.5" r="11" fill="none" stroke="#8b888f" stroke-width="2.2"/><path d="M16.2 21.3L4 34" stroke="#8b888f" stroke-width="2.4"/></svg><svg style="left:334px;top:160px;" width="34" height="40" viewBox="0 0 34 40"><circle cx="9.4" cy="7.8" r="4.2" fill="none" stroke="#8b888f" stroke-width="2.1"/><circle cx="9.4" cy="32" r="4.2" fill="none" stroke="#8b888f" stroke-width="2.1"/><circle cx="24.6" cy="15.4" r="4.2" fill="none" stroke="#8b888f" stroke-width="2.1"/><path d="M9.4 12v15.8M24.6 19.6c0 3.5-2.5 4.6-6 4.6h-3.2c-3.6 0-6 1.5-6 3.6" fill="none" stroke="#8b888f" stroke-width="2.1"/></svg><svg style="left:402px;top:161px;" width="38" height="38" viewBox="0 0 38 38"><path d="M3 10.2h11.5v11.5H3zM3 21.7h11.5v13.3H4.3A1.3 1.3 0 0 1 3 33.7zM14.5 21.7H28v12a1.3 1.3 0 0 1-1.3 1.3H14.5zM3 10.2" fill="none" stroke="#8b888f" stroke-width="2.2" stroke-linejoin="round"/><rect x="22.2" y="3" width="12.6" height="13.5" rx="1.6" fill="none" stroke="#8b888f" stroke-width="2.2"/></svg><svg style="left:479px;top:172px;" width="34" height="21" viewBox="0 0 34 21"><path d="M2 2.5l14.8 15.3L31.8 2.5" fill="none" stroke="#8b888f" stroke-width="2.2"/></svg><svg style="left:120px;top:231px;" width="24" height="16" viewBox="0 0 24 16"><path d="M2 2.5l10 10.5 10-10.5" fill="none" stroke="#8b888f" stroke-width="2"/></svg><svg style="left:151px;top:270px;" width="16" height="24" viewBox="0 0 16 24"><path d="M2.5 1.8l10.5 10.2-10.5 10.2" fill="none" stroke="#8b888f" stroke-width="2"/></svg><svg style="left:151px;top:314px;" width="16" height="24" viewBox="0 0 16 24"><path d="M2.5 1.8l10.5 10.2-10.5 10.2" fill="none" stroke="#8b888f" stroke-width="2"/></svg><svg style="left:151px;top:358px;" width="16" height="24" viewBox="0 0 16 24"><path d="M2.5 1.8l10.5 10.2-10.5 10.2" fill="none" stroke="#f9e37a" stroke-width="2"/></svg><svg style="left:151px;top:402px;" width="16" height="24" viewBox="0 0 16 24"><path d="M2.5 1.8l10.5 10.2-10.5 10.2" fill="none" stroke="#8b888f" stroke-width="2"/></svg><div class="a" style="left:127px;top:1844px;width:14px;height:22px;background:#191919;"></div><svg style="left:125px;top:1842px;" width="16" height="24" viewBox="0 0 16 24"><path d="M2.5 1.8l10.5 10.2-10.5 10.2" fill="none" stroke="#8b888f" stroke-width="2"/></svg><svg style="left:125px;top:1886px;" width="16" height="24" viewBox="0 0 16 24"><path d="M2.5 1.8l10.5 10.2-10.5 10.2" fill="none" stroke="#8b888f" stroke-width="2"/></svg><svg style="left:180px;top:266px;" width="32" height="32" viewBox="0 0 24 24"><path d="M10 4H4c-1.11 0-2 .89-2 2v12c0 1.097.903 2 2 2h16c1.097 0 2-.903 2-2V8a2 2 0 0 0-2-2h-8l-2-2z" fill="#546e7a"/><circle cx="17.4" cy="15" r="6.2" fill="#cfd8dc"/><path d="M14.8 18.2v-6.4l5.2 7.2M20 11.8v4.8" fill="none" stroke="#546e7a" stroke-width="1.1"/></svg><svg style="left:180px;top:310px;" width="32" height="32" viewBox="0 0 24 24"><path d="M10 4H4c-1.11 0-2 .89-2 2v12c0 1.097.903 2 2 2h16c1.097 0 2-.903 2-2V8a2 2 0 0 0-2-2h-8l-2-2z" fill="#8bc34a" opacity=".92"/><path d="M17.4 8.6l5.6 3.2v6.4l-5.6 3.2-5.6-3.2v-6.4z" fill="#dcedc8"/></svg><svg style="left:180px;top:354px;" width="32" height="32" viewBox="0 0 24 24"><path d="M10 4H4c-1.11 0-2 .89-2 2v12c0 1.097.903 2 2 2h16c1.097 0 2-.903 2-2V8a2 2 0 0 0-2-2h-8l-2-2z" fill="#4196e0"/><circle cx="17.4" cy="15.4" r="5.6" fill="#4196e0" stroke="#bbdefb" stroke-width="1.1"/><path d="M11.8 15.4h11.2M17.4 9.8v11.2M12.8 12.6h9.2M12.8 18.2h9.2" stroke="#bbdefb" stroke-width="1"/><ellipse cx="17.4" cy="15.4" rx="2.6" ry="5.6" fill="none" stroke="#bbdefb" stroke-width="1"/></svg><svg style="left:180px;top:398px;" width="32" height="32" viewBox="0 0 24 24"><path d="M10 4H4c-1.11 0-2 .89-2 2v12c0 1.097.903 2 2 2h16c1.097 0 2-.903 2-2V8a2 2 0 0 0-2-2h-8l-2-2z" fill="#5fa65b"/><path d="M14.6 12.6l-3.6 3.8 3.6 3.8M20.2 12.6l3.6 3.8-3.6 3.8M18.2 11.2l-2 10" fill="none" stroke="#c8e6c9" stroke-width="1.2"/></svg><svg style="left:180px;top:442px;" width="32" height="32" viewBox="0 0 24 24"><path d="M6 2.8V9.6M6 14.4V21M3 12H9M11.7 2.8V5.6M11.7 10V21M8.7 7.8H14.7M17.9 2.8V13.6M17.9 18.2V21M14.9 15.9H20.9" stroke="#f6c344" stroke-width="2"/></svg><svg style="left:180px;top:486px;" width="32" height="32" viewBox="0 0 24 24"><path d="M2 12l5-8.6h10L22 12l-5 8.6H7z" fill="#3f51b5" opacity=".9"/><path d="M12 5.8l5.4 3.1v6.2L12 18.2l-5.4-3.1V8.9z" fill="#7986cb" stroke="#1a1a1a" stroke-width="1.6"/></svg><svg style="left:180px;top:530px;" width="32" height="32" viewBox="0 0 24 24"><path d="M12 2.5l9.5 9.5-9.5 9.5L2.5 12z" fill="#e64a19" opacity=".9"/><path d="M9.2 5.3l2.6 2.8v8.6M11.8 10.3l4.2 2.6" fill="none" stroke="#1a1a1a" stroke-width="1.4"/><circle cx="11.8" cy="16.6" r="1.6" fill="#1a1a1a"/><circle cx="16.2" cy="13" r="1.6" fill="#1a1a1a"/></svg><svg style="left:180px;top:574px;" width="32" height="32" viewBox="0 0 24 24"><path d="M12 4.6c5.6 0 9.6 3.6 9.6 8.2 0 4-4 6.6-9.6 6.6s-9.6-2.6-9.6-6.6c0-4.6 4-8.2 9.6-8.2z" fill="#fbf0df"/><circle cx="9" cy="12.4" r="1.1" fill="#1a1a1a"/><circle cx="15" cy="12.4" r="1.1" fill="#1a1a1a"/><ellipse cx="7.4" cy="14.6" rx="1.3" ry=".7" fill="#f4a6c0"/><ellipse cx="16.6" cy="14.6" rx="1.3" ry=".7" fill="#f4a6c0"/><path d="M10.8 14.4h2.4c0 1.3-.5 1.9-1.2 1.9s-1.2-.6-1.2-1.9z" fill="#b71422"/><path d="M10 6.2c.8.6 1.2 1.4 1.2 2.2M12.5 6c.3.8.3 1.6 0 2.2" fill="none" stroke="#ccbea7" stroke-width=".5"/></svg><svg style="left:180px;top:618px;" width="32" height="32" viewBox="0 0 24 24"><path d="M6.2 3.6c-1.6 0-2.2.7-2.2 2.2v3.4c0 1.3-.8 2.2-2 2.8 1.2.6 2 1.5 2 2.8v3.4c0 1.5.6 2.2 2.2 2.2M17.8 3.6c1.6 0 2.2.7 2.2 2.2v3.4c0 1.3.8 2.2 2 2.8-1.2.6-2 1.5-2 2.8v3.4c0 1.5-.6 2.2-2.2 2.2" fill="none" stroke="#f9c33b" stroke-width="1.6"/><circle cx="8.6" cy="15.6" r=".9" fill="#f9c33b"/><circle cx="12" cy="15.6" r=".9" fill="#f9c33b"/><circle cx="15.4" cy="15.6" r=".9" fill="#f9c33b"/></svg><svg style="left:180px;top:706px;" width="32" height="32" viewBox="0 0 24 24"><path d="M6.2 3.6c-1.6 0-2.2.7-2.2 2.2v3.4c0 1.3-.8 2.2-2 2.8 1.2.6 2 1.5 2 2.8v3.4c0 1.5.6 2.2 2.2 2.2M17.8 3.6c1.6 0 2.2.7 2.2 2.2v3.4c0 1.3.8 2.2 2 2.8-1.2.6-2 1.5-2 2.8v3.4c0 1.5-.6 2.2-2.2 2.2" fill="none" stroke="#f9c33b" stroke-width="1.6"/><circle cx="8.6" cy="15.6" r=".9" fill="#f9c33b"/><circle cx="12" cy="15.6" r=".9" fill="#f9c33b"/><circle cx="15.4" cy="15.6" r=".9" fill="#f9c33b"/></svg><svg style="left:180px;top:662px;" width="32" height="32" viewBox="0 0 24 24"><rect x="2.2" y="2.2" width="19.6" height="19.6" fill="#3d86d1"/><text x="7.7" y="19.9" font-family="Liberation Sans" font-weight="bold" font-size="10.4" fill="#1a1a1a" textLength="12.1" lengthAdjust="spacingAndGlyphs">TS</text></svg><svg style="left:180px;top:750px;" width="32" height="32" viewBox="0 0 24 24"><rect x="2.9" y="2.9" width="18.2" height="18.2" fill="none" stroke="#3d86d1" stroke-width="1.4"/><text x="7.7" y="19.7" font-family="Liberation Sans" font-weight="bold" font-size="10.4" fill="#3d86d1" textLength="12.1" lengthAdjust="spacingAndGlyphs">TS</text></svg><svg style="left:180px;top:794px;" width="32" height="32" viewBox="0 0 24 24"><circle cx="12" cy="12" r="10" fill="#cfd8dc"/><path d="M8.6 17V7.2l7.6 10.6M15.6 7.2v7" fill="none" stroke="#1a1a1a" stroke-width="1.4"/></svg><svg style="left:180px;top:838px;" width="32" height="32" viewBox="0 0 24 24"><path d="M12 2.3l8.6 5v9.6L12 21.8l-8.6-4.9V7.3z" fill="none" stroke="#8bc34a" stroke-width="1.2"/><path d="M9 8.2v6.4c0 1.4-.7 2.2-2 2.2" fill="none" stroke="#8bc34a" stroke-width="1.4"/><path d="M16.4 9.2c-.4-.8-1.2-1.1-2.1-1.1-1.2 0-2 .6-2 1.5 0 2 4.3 1.2 4.3 3.5 0 1-.9 1.6-2.2 1.6-1 0-1.9-.4-2.3-1.2" fill="none" stroke="#8bc34a" stroke-width="1.3"/></svg><svg style="left:180px;top:882px;" width="32" height="32" viewBox="0 0 24 24"><circle cx="12" cy="12" r="9.6" fill="none" stroke="#e53935" stroke-width="1.3"/><path d="M12 2.6l8.2 14.8H3.6z" fill="none" stroke="#e53935" stroke-width="1.3"/><rect x="9.6" y="10.4" width="4.8" height="4.8" fill="none" stroke="#e53935" stroke-width="1.1"/></svg><svg style="left:180px;top:926px;" width="32" height="32" viewBox="0 0 24 24"><circle cx="12" cy="12" r="10" fill="#4a92e6"/><rect x="11" y="10" width="2" height="7" fill="#1a1a1a"/><circle cx="12" cy="7.6" r="1.2" fill="#1a1a1a"/></svg><svg style="left:180px;top:970px;" width="32" height="32" viewBox="0 0 24 24"><path d="M7.4 10.2c.9-3.2 2.9-4.8 5.6-4.8 4.2 0 4.6 3.2 6.8 3.7 1.4.3 2.6-.2 3.6-1.6-.9 3.2-2.9 4.8-5.6 4.8-4.2 0-4.6-3.2-6.8-3.7-1.4-.3-2.6.2-3.6 1.6zM1.6 16.6c.9-3.2 2.9-4.8 5.6-4.8 4.2 0 4.6 3.2 6.8 3.7 1.4.3 2.6-.2 3.6-1.6-.9 3.2-2.9 4.8-5.6 4.8-4.2 0-4.6-3.2-6.8-3.7-1.4-.3-2.6.2-3.6 1.6z" fill="#4db6ac"/></svg><svg style="left:180px;top:1014px;" width="32" height="32" viewBox="0 0 24 24"><path d="M5.4 2.8h9l4.6 4.6v14.4a1 1 0 0 1-1 1H5.4a1 1 0 0 1-1-1V3.8a1 1 0 0 1 1-1z" fill="#757575"/><path d="M14.2 2.8v4.8h4.8" fill="#1a1a1a" opacity=".35"/><path d="M4.4 13.4h6M4.4 17h6" stroke="#1a1a1a" stroke-width="1.2"/><rect x="10.3" y="11.3" width="12.8" height="12.6" fill="#3d86d1"/><text x="11.2" y="21.6" font-family="Liberation Sans" font-weight="bold" font-size="8.6" fill="#f0f0f0" letter-spacing="-.2">TS</text></svg><svg style="left:622.7px;top:168px;" width="26" height="26" viewBox="0 0 26 26"><rect width="26" height="26" fill="#3d86d1"/><text x="7.3" y="23.4" font-family="Liberation Sans" font-weight="bold" font-size="14.8" fill="#1a1a1a" textLength="16.5" lengthAdjust="spacingAndGlyphs">TS</text></svg><svg style="left:936px;top:168px;" width="26" height="26" viewBox="0 0 26 26"><rect width="26" height="26" fill="#3d86d1"/><text x="7.3" y="23.4" font-family="Liberation Sans" font-weight="bold" font-size="14.8" fill="#1a1a1a" textLength="16.5" lengthAdjust="spacingAndGlyphs">TS</text></svg><svg style="left:955px;top:225px;" width="26" height="26" viewBox="0 0 26 26"><rect width="26" height="26" fill="#3d86d1"/><text x="7.3" y="23.4" font-family="Liberation Sans" font-weight="bold" font-size="14.8" fill="#1a1a1a" textLength="16.5" lengthAdjust="spacingAndGlyphs">TS</text></svg><svg style="left:1181px;top:170px;" width="22" height="22" viewBox="0 0 22 22"><path d="M3 3l16 16M19 3L3 19" stroke="#f9e37a" stroke-width="2"/></svg><svg style="left:1245px;top:167px;" width="28" height="28" viewBox="0 0 28 28"><circle cx="14" cy="14" r="13.3" fill="#cfd8dc"/><path d="M9.6 20.5V8l10 13.8M18.4 8v9" fill="none" stroke="#1a1a1a" stroke-width="2"/></svg><svg style="left:680.4px;top:230px;" width="14" height="20" viewBox="0 0 14 20"><path d="M1.5 1l9.5 9-9.5 9" fill="none" stroke="#8b888f" stroke-width="1.8"/></svg><svg style="left:741.2px;top:230px;" width="14" height="20" viewBox="0 0 14 20"><path d="M1.5 1l9.5 9-9.5 9" fill="none" stroke="#8b888f" stroke-width="1.8"/></svg><svg style="left:805px;top:230px;" width="14" height="20" viewBox="0 0 14 20"><path d="M1.5 1l9.5 9-9.5 9" fill="none" stroke="#8b888f" stroke-width="1.8"/></svg><svg style="left:931px;top:230px;" width="14" height="20" viewBox="0 0 14 20"><path d="M1.5 1l9.5 9-9.5 9" fill="none" stroke="#8b888f" stroke-width="1.8"/></svg><svg style="left:1122px;top:230px;" width="14" height="20" viewBox="0 0 14 20"><path d="M1.5 1l9.5 9-9.5 9" fill="none" stroke="#8b888f" stroke-width="1.8"/></svg><svg style="left:1144px;top:226px;" width="30" height="24" viewBox="0 0 30 24"><path d="M5.5 2H2v20h3.5M24.5 2H28v20h-3.5" fill="none" stroke="#5ad4e6" stroke-width="2"/><path d="M8 11.5l7-4 7 3.5v5l-7 4-7-3.5z M8 11.5l7 3.5 7-4M15 15v4.5" fill="none" stroke="#5ad4e6" stroke-width="1.8" stroke-linejoin="round"/></svg><svg style="left:2896px;top:168px;" width="24" height="28" viewBox="0 0 24 28"><path d="M2.5 2.2v23.6L21.2 14z" fill="none" stroke="#f0eef3" stroke-width="2.2" stroke-linejoin="round"/></svg><svg style="left:2931px;top:176px;" width="18" height="12" viewBox="0 0 18 12"><path d="M1.5 1.5l7.5 7.5 7.5-7.5" fill="none" stroke="#f0eef3" stroke-width="1.8"/></svg><svg style="left:2970px;top:165px;" width="32" height="34" viewBox="0 0 32 34"><circle cx="8" cy="6" r="4" fill="none" stroke="#f0eef3" stroke-width="2"/><circle cx="26" cy="27.5" r="4" fill="none" stroke="#f0eef3" stroke-width="2"/><path d="M8 10v12c0 2 1 3 3 3h7M15 21.5l3.5 3.5-3.5 3.5M26 23.5V11c0-2-1-3-3-3h-7M19 4.5L15.5 8l3.5 3.5" fill="none" stroke="#f0eef3" stroke-width="2"/></svg><svg style="left:3025px;top:166px;" width="28" height="28" viewBox="0 0 28 28"><rect x="1.8" y="1.8" width="24.4" height="24.4" rx="2" fill="none" stroke="#f0eef3" stroke-width="2.2"/><path d="M14 2v24" stroke="#f0eef3" stroke-width="2.2"/></svg><div class="a" style="left:3077.7px;top:178.7px;width:4.6px;height:4.6px;border-radius:50%;background:#f0eef3"></div><div class="a" style="left:3087.7px;top:178.7px;width:4.6px;height:4.6px;border-radius:50%;background:#f0eef3"></div><div class="a" style="left:3097.7px;top:178.7px;width:4.6px;height:4.6px;border-radius:50%;background:#f0eef3"></div><svg style="left:2692px;top:1128px;" width="30" height="30" viewBox="0 0 30 30"><rect x="1.5" y="1.5" width="27" height="27" rx="2.5" fill="none" stroke="#f0eef3" stroke-width="2"/><path d="M10 8.5l6.5 6.5-6.5 6.5" fill="none" stroke="#f0eef3" stroke-width="2"/></svg><svg style="left:2789px;top:1128px;" width="28" height="28" viewBox="0 0 28 28"><path d="M13.5 1v26M1 13.5h26" stroke="#f0eef3" stroke-width="2"/></svg><svg style="left:2828px;top:1138px;" width="16" height="12" viewBox="0 0 16 12"><path d="M1.5 1.5l6.5 6.5 6.5-6.5" fill="none" stroke="#f0eef3" stroke-width="1.8"/></svg><svg style="left:2869px;top:1128px;" width="28" height="28" viewBox="0 0 28 28"><rect x="1.5" y="1.5" width="25" height="25" rx="2.5" fill="none" stroke="#f0eef3" stroke-width="2"/><path d="M14 2v24" stroke="#f0eef3" stroke-width="2"/></svg><svg style="left:2921px;top:1128px;" width="24" height="28" viewBox="0 0 24 28"><path d="M1.5 5.5h21M8 5V2h8v3M4 6l1.2 18.5a1.6 1.6 0 0 0 1.6 1.5h10.4a1.6 1.6 0 0 0 1.6-1.5L20 6M9 10v12M12 10v12M15 10v12" fill="none" stroke="#f0eef3" stroke-width="2"/></svg><div class="a" style="left:2973.3999999999996px;top:1140.5px;width:4.6px;height:4.6px;border-radius:50%;background:#f0eef3"></div><div class="a" style="left:2983.7px;top:1140.5px;width:4.6px;height:4.6px;border-radius:50%;background:#f0eef3"></div><div class="a" style="left:2994.1px;top:1140.5px;width:4.6px;height:4.6px;border-radius:50%;background:#f0eef3"></div><svg style="left:3027px;top:1134px;" width="22" height="14" viewBox="0 0 22 14"><path d="M1.5 11.5l9.5-9.5 9.5 9.5" fill="none" stroke="#f0eef3" stroke-width="2"/></svg><svg style="left:3080px;top:1133px;" width="20" height="20" viewBox="0 0 20 20"><path d="M1.5 1.5l17 17M18.5 1.5l-17 17" stroke="#f0eef3" stroke-width="2"/></svg><svg style="left:135px;top:1929px;" width="22" height="26" viewBox="0 0 22 26"><path d="M2 24l7-7-7-7M20 2l-7 7 7 7" fill="none" stroke="#7bd88f" stroke-width="2"/></svg><svg style="left:193px;top:1927px;" width="26" height="30" viewBox="0 0 26 30"><circle cx="6" cy="5.5" r="3.6" fill="none" stroke="#8b888f" stroke-width="1.9"/><circle cx="6" cy="24.5" r="3.6" fill="none" stroke="#8b888f" stroke-width="1.9"/><circle cx="19" cy="11" r="3.6" fill="none" stroke="#8b888f" stroke-width="1.9"/><path d="M6 9v12M19 14.6c0 3-2 4-5 4h-3c-3 0-5 1-5 2.5" fill="none" stroke="#8b888f" stroke-width="1.9"/></svg><svg style="left:319px;top:1929px;" width="30" height="26" viewBox="0 0 30 26"><path d="M4 12.5A10 10 0 0 1 23 8.5M26 13.5A10 10 0 0 1 7 17.5M19 8.5h4.5V4M11 17.5H6.5V22" fill="none" stroke="#8b888f" stroke-width="1.9"/></svg><svg style="left:375px;top:1929px;" width="28" height="28" viewBox="0 0 28 28"><circle cx="13.5" cy="13.5" r="11.5" fill="none" stroke="#8b888f" stroke-width="1.9"/><path d="M9 9l9 9M18 9l-9 9" stroke="#8b888f" stroke-width="1.9"/></svg><svg style="left:448px;top:1928px;" width="27" height="26" viewBox="0 0 27 26"><path d="M13.5 2L25.5 23.5h-24z" fill="none" stroke="#8b888f" stroke-width="1.9" stroke-linejoin="round"/><path d="M13.5 9v7.5" stroke="#8b888f" stroke-width="1.9"/><circle cx="13.5" cy="19.5" r="1.2" fill="#8b888f"/></svg><svg style="left:528px;top:1933px;" width="18" height="20" viewBox="0 0 18 20"><path d="M9 2l7 4v8l-7 4-7-4V6z" fill="none" stroke="#8b888f" stroke-width="1.9"/><path d="M9 2v8l7-4" fill="none" stroke="#8b888f" stroke-width="1.5"/></svg><svg style="left:2587px;top:1929px;" width="26" height="26" viewBox="0 0 26 26"><path d="M7 2.5c-2.5 0-3 1-3 3v4c0 1.5-1 2.5-2.5 3 1.5.5 2.5 1.5 2.5 3v4c0 2 .5 3 3 3M19 2.5c2.5 0 3 1 3 3v4c0 1.5 1 2.5 2.5 3-1.5.5-2.5 1.5-2.5 3v4c0 2-.5 3-3 3" fill="none" stroke="#8b888f" stroke-width="1.8"/></svg><svg style="left:2776px;top:1928px;" width="27" height="28" viewBox="0 0 27 28"><circle cx="13.5" cy="12" r="2.8" fill="none" stroke="#8b888f" stroke-width="1.8"/><path d="M13.5 15v11M8 17.5a7 7 0 1 1 11 0M5 20.5a11 11 0 1 1 17 0" fill="none" stroke="#8b888f" stroke-width="1.8"/></svg><svg style="left:2927px;top:1930px;" width="26" height="24" viewBox="0 0 26 24"><path d="M2 13l7 8L24 3" fill="none" stroke="#8b888f" stroke-width="1.9"/></svg><svg style="left:3078px;top:1927px;" width="30" height="32" viewBox="0 0 30 32"><path d="M4.2 23.4l1.8-5.5V12c0-5 3.5-8.9 8-8.9" fill="none" stroke="#7f7d82" stroke-width="1.9"/><path d="M20.6 13.3l.6 4.6 2.6 5.5H4.2" fill="none" stroke="#7f7d82" stroke-width="1.9"/><path d="M10.5 24.2a3.4 3.4 0 0 0 6.8 0z" fill="#7f7d82"/><circle cx="21" cy="7.7" r="5.2" fill="#7f7d82"/></svg></div><div class="a" style="left:112px;top:76px;width:3024px;height:1888px;border-radius:20px;border:2px solid #535353;border-top-color:#666666"></div></body></html>
